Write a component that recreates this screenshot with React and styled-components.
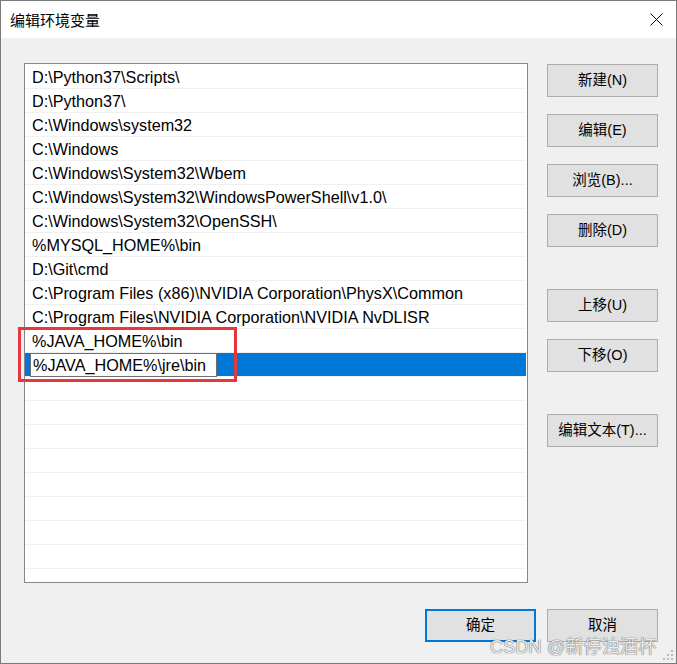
import React from "react";
import styled, { createGlobalStyle } from "styled-components";

const Global = createGlobalStyle`
  html, body { margin: 0; padding: 0; background: #f0f0f0; }
  body { font-family: "Liberation Sans", "Noto Sans CJK SC", sans-serif; }
  * { box-sizing: border-box; }
`;

const Window = styled.div`
  position: relative;
  width: 677px;
  height: 664px;
  border: 1px solid #7a7a7a;
  background: #f0f0f0;
  display: flex;
  flex-direction: column;
  overflow: hidden;
`;

const TitleBar = styled.div`
  height: 37px;
  background: #ffffff;
  display: flex;
  align-items: center;
  justify-content: space-between;
  padding: 0 13px 0 9px;
  flex-shrink: 0;
`;

const Title = styled.div`
  font-family: "Noto Sans CJK SC", sans-serif;
  font-size: 15px;
  color: #000;
  line-height: 1;
  margin-top: -1px;
`;

const CloseIcon = styled.svg`
  width: 13px;
  height: 13px;
  display: block;
  margin-top: -1px;
`;

const Body = styled.div`
  display: flex;
  flex-direction: column;
  padding: 25px 18px 0 23px;
`;

const MainRow = styled.div`
  display: flex;
  gap: 19px;
  align-items: flex-start;
`;

const ListBox = styled.div`
  width: 504px;
  height: 520px;
  border: 1px solid #828790;
  background: #fff;
  padding-top: 1px;
  overflow: hidden;
`;

const Row = styled.div`
  height: 24px;
  margin: 0 1px 0 0;
  border-bottom: 1px solid #f0f0f0;
  display: flex;
  align-items: center;
  padding-left: 7px;
  padding-top: 1px;
  font-size: 16.2px;
  color: #000;
  white-space: nowrap;
  background: ${(p) => (p.$selected ? "#0078d7" : "transparent")};
`;

const EditBox = styled.div`
  width: 187px;
  height: 24px;
  margin-left: -2px;
  border: 1px solid #6e6e6e;
  background: #fff;
  display: flex;
  align-items: center;
  padding-left: 2px;
  font-size: 16.2px;
  color: #000;
`;

const ButtonColumn = styled.div`
  display: flex;
  flex-direction: column;
  width: 111px;
  margin-top: 1px;
`;

const Button = styled.button`
  width: 111px;
  height: 33px;
  margin-top: ${(p) => p.$gap || 0}px;
  background: #e1e1e1;
  border: ${(p) => (p.$primary ? "2px solid #0078d7" : "1px solid #adadad")};
  font-family: "Liberation Sans", "Noto Sans CJK SC", sans-serif;
  font-size: 14.5px;
  color: #000;
  padding: 0;
  display: flex;
  align-items: center;
  justify-content: center;
  line-height: 1;
`;

const Footer = styled.div`
  display: flex;
  justify-content: flex-end;
  gap: 11px;
  margin-top: 26px;
`;

const Highlight = styled.div`
  position: absolute;
  left: 17px;
  top: 326px;
  width: 219px;
  height: 55px;
  border: 3px solid #e8363d;
  pointer-events: none;
`;

const Watermark = styled.div`
  position: absolute;
  left: 489px;
  top: 631px;
  font-family: "Liberation Sans", "Noto Sans CJK SC", sans-serif;
  font-size: 18px;
  color: rgba(250, 250, 250, 0.92);
  text-shadow: 0 0 1px #555, 0 0 1px #777;
  white-space: nowrap;
  letter-spacing: 0.2px;
`;

const Grip = styled.svg`
  position: absolute;
  right: 3px;
  bottom: 3px;
  width: 10px;
  height: 10px;
`;

const paths = [
  "D:\\Python37\\Scripts\\",
  "D:\\Python37\\",
  "C:\\Windows\\system32",
  "C:\\Windows",
  "C:\\Windows\\System32\\Wbem",
  "C:\\Windows\\System32\\WindowsPowerShell\\v1.0\\",
  "C:\\Windows\\System32\\OpenSSH\\",
  "%MYSQL_HOME%\\bin",
  "D:\\Git\\cmd",
  "C:\\Program Files (x86)\\NVIDIA Corporation\\PhysX\\Common",
  "C:\\Program Files\\NVIDIA Corporation\\NVIDIA NvDLISR",
  "%JAVA_HOME%\\bin",
];

export default function App() {
  const empty = Array.from({ length: 9 });
  return (
    <>
      <Global />
      <Window>
        <TitleBar>
          <Title>编辑环境变量</Title>
          <CloseIcon viewBox="0 0 13 13">
            <path d="M0.5 0.5 L12.5 12.5 M12.5 0.5 L0.5 12.5" stroke="#000" strokeWidth="1" fill="none" />
          </CloseIcon>
        </TitleBar>
        <Body>
          <MainRow>
            <ListBox>
              {paths.map((p) => (
                <Row key={p}>{p}</Row>
              ))}
              <Row $selected>
                <EditBox>%JAVA_HOME%\jre\bin</EditBox>
              </Row>
              {empty.map((_, i) => (
                <Row key={"e" + i} />
              ))}
            </ListBox>
            <ButtonColumn>
              <Button>新建(N)</Button>
              <Button $gap={17}>编辑(E)</Button>
              <Button $gap={17}>浏览(B)...</Button>
              <Button $gap={17}>删除(D)</Button>
              <Button $gap={42}>上移(U)</Button>
              <Button $gap={17}>下移(O)</Button>
              <Button $gap={42}>编辑文本(T)...</Button>
            </ButtonColumn>
          </MainRow>
          <Footer>
            <Button $primary>确定</Button>
            <Button>取消</Button>
          </Footer>
        </Body>
        <Highlight />
        <Watermark>CSDN @新停浊酒杯</Watermark>
        <Grip viewBox="0 0 10 10">
          {[
            [8, 0], [8, 4], [4, 4], [8, 8], [4, 8], [0, 8],
          ].map(([x, y]) => (
            <rect key={x + "-" + y} x={x} y={y} width="2" height="2" fill="#bcbcbc" />
          ))}
        </Grip>
      </Window>
    </>
  );
}
